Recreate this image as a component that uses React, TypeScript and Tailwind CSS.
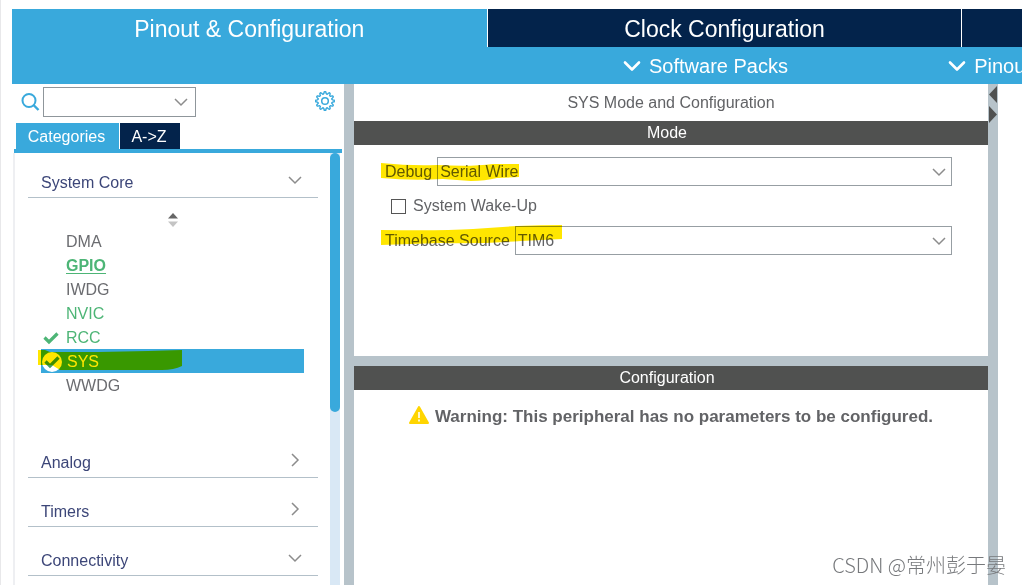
import { useState } from 'react';
import { clsx } from 'clsx';

type Peripheral = {
  name: string;
  state: 'default' | 'available' | 'configured';
  bold?: boolean;
};

const peripherals: Peripheral[] = [
  { name: 'DMA', state: 'default' },
  { name: 'GPIO', state: 'available', bold: true },
  { name: 'IWDG', state: 'default' },
  { name: 'NVIC', state: 'available' },
  { name: 'RCC', state: 'configured' },
  { name: 'SYS', state: 'configured' },
  { name: 'WWDG', state: 'default' },
];

function Chevron({ right = false }: { right?: boolean }) {
  return (
    <svg
      width="14"
      height="14"
      viewBox="0 0 14 14"
      fill="none"
      aria-hidden
      className={clsx('shrink-0', right && '-rotate-90')}
    >
      <path d="M1 4l6 6 6-6" stroke="#8c8c8c" strokeWidth="1.5" />
    </svg>
  );
}

function MenuChevron() {
  return (
    <svg width="18" height="12" viewBox="0 0 18 12" fill="none" aria-hidden className="shrink-0">
      <path
        d="M2 2.500L9 9.500l7-7"
        stroke="white"
        strokeWidth="2.600"
        strokeLinecap="round"
        strokeLinejoin="round"
      />
    </svg>
  );
}

function CheckIcon({ className }: { className?: string }) {
  return (
    <svg width="16" height="14" viewBox="0 0 16 14" fill="none" aria-hidden className={className}>
      <path d="M1.500 6.500L6 11l8.500-8.500" stroke="currentColor" strokeWidth="3.200" />
    </svg>
  );
}

function GearIcon() {
  const teeth = Array.from({ length: 80 }, (_, i) => {
    const a = (i / 80) * Math.PI * 2;
    const r = 8.2 + 1.1 * Math.max(-1, Math.min(1, 1.8 * Math.cos(a * 12)));
    return `${(10 + r * Math.cos(a)).toFixed(2)},${(10 + r * Math.sin(a)).toFixed(2)}`;
  }).join(' ');
  return (
    <svg width="20" height="20" viewBox="0 0 20 20" fill="none" stroke="#39a9dc" aria-hidden>
      <polygon points={teeth} strokeWidth="1.400" strokeLinejoin="round" />
      <circle cx="10" cy="10" r="3.300" strokeWidth="1.500" />
    </svg>
  );
}

function Section({
  title,
  open,
  onToggle,
  children,
}: {
  title: string;
  open: boolean;
  onToggle: () => void;
  children?: React.ReactNode;
}) {
  return (
    <section>
      <button
        type="button"
        aria-expanded={open}
        onClick={onToggle}
        className="flex h-[45px] w-full items-end justify-between border-b border-[#b3c0c9] pr-4 pb-0.5 pl-[13px] text-left text-base leading-6 text-[#3c4678]"
      >
        <span>{title}</span>
        <span className="flex h-[30px] items-center">
          <Chevron right={!open} />
        </span>
      </button>
      {children}
    </section>
  );
}

function SelectField({
  id,
  label,
  options,
  children,
}: {
  id: string;
  label: string;
  options: string[];
  children?: React.ReactNode;
}) {
  return (
    <div className="relative flex h-[29px] items-center gap-[5px]">
      <label htmlFor={id} className="whitespace-nowrap">
        {label}
      </label>
      <div className="relative h-full flex-1">
        <select
          id={id}
          className="h-full w-full appearance-none border border-[#979ea3] bg-white pl-0.5 outline-none focus:border-[#39a9dc]"
        >
          {options.map((o) => (
            <option key={o}>{o}</option>
          ))}
        </select>
        <span className="pointer-events-none absolute inset-y-0 right-1.5 flex items-center">
          <Chevron />
        </span>
      </div>
      {children}
    </div>
  );
}

function Header() {
  const tab = 'flex h-[38px] w-[47%] shrink-0 items-center justify-center pt-0.5 text-[23px] text-white';
  return (
    <header className="overflow-hidden">
      <nav className="flex" aria-label="Views">
        <button type="button" className={clsx(tab, 'bg-[#39a9dc]')}>
          Pinout &amp; Configuration
        </button>
        <button type="button" className={clsx(tab, 'border-l border-white bg-[#03234b]')}>
          Clock Configuration
        </button>
        <div className="flex-1 border-l border-white bg-[#03234b]" />
      </nav>
      <div className="flex h-[37px] items-center bg-[#39a9dc] text-xl whitespace-nowrap text-white">
        <div className="w-[60%] shrink-0" />
        <button type="button" className="flex w-[32%] shrink-0 items-center gap-2 pl-[5px]">
          <MenuChevron />
          Software Packs
        </button>
        <button type="button" className="flex shrink-0 items-center gap-2 pl-[7px]">
          <MenuChevron />
          Pinout
        </button>
      </div>
    </header>
  );
}

function PeripheralList({ selected, onSelect }: { selected: string; onSelect: (name: string) => void }) {
  return (
    <div className="pt-3 pb-8">
      <button type="button" aria-label="Sort" className="mx-auto flex h-[19px] w-4 justify-center pt-[3px]">
        <svg width="10" height="14" viewBox="0 0 10 14" aria-hidden>
          <path d="M0 5.500L5 0l5 5.500z" fill="#666" />
          <path d="M0 8.500h10L5 14z" fill="#c4c4c4" />
        </svg>
      </button>
      <ul className="pr-3.5 pl-[13px]">
        {peripherals.map((p) => {
          const active = p.name === selected;
          return (
            <li key={p.name} className="relative">
              <button
                type="button"
                onClick={() => onSelect(p.name)}
                className={clsx(
                  'flex h-6 w-full items-center pt-0.5 text-base',
                  active && 'bg-[#39a9dc] pl-px text-white',
                  !active && p.state === 'default' && 'text-[#6b6c70]',
                  !active && p.state !== 'default' && 'text-[#4db576]',
                  p.bold && 'font-bold underline underline-offset-2'
                )}
              >
                <span className="flex w-[25px] items-center">
                  {p.state === 'configured' &&
                    (active ? (
                      <span className="flex size-5 items-center justify-center rounded-full bg-white">
                        <CheckIcon className="text-[#3f9d63]" />
                      </span>
                    ) : (
                      <CheckIcon className="ml-0.5" />
                    ))}
                </span>
                {p.name}
              </button>
              {p.name === 'SYS' && (
                <svg
                  width="146"
                  height="22"
                  viewBox="0 0 146 22"
                  aria-hidden
                  className="pointer-events-none absolute top-0 -left-[3px] mix-blend-multiply"
                >
                  <path
                    d="M0 1H7L12 3H60L110 2L144 1V17Q136 21 124 21H22L14 16H0Z"
                    fill="#ffe600"
                  />
                </svg>
              )}
            </li>
          );
        })}
      </ul>
    </div>
  );
}

function Sidebar() {
  const [openSections, setOpenSections] = useState<string[]>(['System Core', 'Connectivity']);
  const [selected, setSelected] = useState('SYS');

  const toggle = (name: string) =>
    setOpenSections((list) => (list.includes(name) ? list.filter((n) => n !== name) : [...list, name]));

  return (
    <aside className="flex w-[332px] shrink-0 flex-col">
      <div className="flex items-center pt-[3px] pr-[9px] pl-[9px]">
        <svg width="19" height="19" viewBox="0 0 19 19" fill="none" aria-hidden className="mr-[3px]">
          <circle cx="8" cy="7.500" r="6.500" stroke="#39a9dc" strokeWidth="2" />
          <path d="M12.500 12l5 5" stroke="#39a9dc" strokeWidth="2.400" />
        </svg>
        <div className="relative h-[30px] w-[153px]">
          <input
            type="text"
            aria-label="Search peripherals"
            className="h-full w-full border border-[#8f969b] px-1 pr-7 text-base outline-none focus:border-[#39a9dc]"
          />
          <button type="button" aria-label="Show history" className="absolute inset-y-0 right-2 flex items-center">
            <Chevron />
          </button>
        </div>
        <button type="button" aria-label="Settings" className="ml-auto pb-0.5">
          <GearIcon />
        </button>
      </div>

      <div className="mt-1.5 mr-0.5 ml-0.5 flex gap-px border-b-4 border-[#39a9dc] pl-0.5 text-base text-white">
        <button type="button" className="h-[26px] w-[103px] bg-[#39a9dc] pr-0.5 pt-0.5">
          Categories
        </button>
        <button type="button" className="h-[26px] w-[60px] bg-[#03234b] pr-0.5 pt-0.5">
          A-&gt;Z
        </button>
      </div>

      <div className="ml-px flex flex-1 border-l-2 border-[#eeeff2]">
        <div className="flex flex-1 flex-col gap-1 pr-3 pl-[13px]">
          <Section
            title="System Core"
            open={openSections.includes('System Core')}
            onToggle={() => toggle('System Core')}
          >
            {openSections.includes('System Core') && (
              <PeripheralList selected={selected} onSelect={setSelected} />
            )}
          </Section>
          {['Analog', 'Timers', 'Connectivity'].map((title) => (
            <Section
              key={title}
              title={title}
              open={openSections.includes(title)}
              onToggle={() => toggle(title)}
            />
          ))}
        </div>
        <div className="mr-1 w-2.5 bg-[#d9e8f5]">
          <div className="h-[60%] rounded-full bg-[#39a9dc]" />
        </div>
      </div>
    </aside>
  );
}

function TitleBar({ children }: { children: React.ReactNode }) {
  return (
    <h2 className="flex h-6 items-center justify-center bg-[#505150] pr-2 text-base text-white">{children}</h2>
  );
}

function MainPanel() {
  return (
    <main className="flex min-w-0 flex-1 flex-col border-x-10 border-[#b7c3ca] text-base text-[#626366]">
      <h1 className="flex h-[37px] items-center justify-center">SYS Mode and Configuration</h1>

      <TitleBar>Mode</TitleBar>
      <div className="flex flex-col gap-1.5 pt-3 pr-9 pb-[101px] pl-[31px]">
        <SelectField id="debug" label="Debug" options={['Serial Wire', 'Disable', 'JTAG (4 pins)']}>
          <svg
            width="138"
            height="19"
            viewBox="0 0 138 19"
            aria-hidden
            className="pointer-events-none absolute top-1.5 -left-1 mix-blend-multiply"
          >
            <path
              d="M0 0Q30 3 56 2Q90 4 112 1L138 1V14L116 15Q104 18 90 18L62 16Q30 18 0 15Z"
              fill="#ffe600"
            />
          </svg>
        </SelectField>
        <label className="flex h-7 items-center gap-[7px] pl-1.5">
          <input type="checkbox" className="size-[15px] appearance-none border border-[#555] checked:bg-[#39a9dc]" />
          System Wake-Up
        </label>
        <SelectField id="timebase" label="Timebase Source" options={['TIM6', 'SysTick', 'TIM7']}>
          <svg
            width="181"
            height="20"
            viewBox="0 0 181 20"
            aria-hidden
            className="pointer-events-none absolute -top-px -left-1 mix-blend-multiply"
          >
            <path
              d="M0 5Q60 6 92 4L136 1Q160 0 181 0V14L140 16Q100 19 60 18L0 20Z"
              fill="#ffe600"
            />
          </svg>
        </SelectField>
      </div>

      <div className="h-2.5 bg-[#b7c3ca]" />
      <TitleBar>Configuration</TitleBar>
      <p className="flex items-center justify-center gap-1.5 pt-[15px] text-[17px] leading-6 font-bold whitespace-nowrap">
        <svg width="20" height="18" viewBox="0 0 20 18" aria-hidden className="mb-1">
          <path d="M10 1L19 17H1z" fill="#ffd500" stroke="#ffd500" strokeWidth="2" strokeLinejoin="round" />
          <path d="M10 6v6M10 13.500v2" stroke="white" strokeWidth="1.600" />
        </svg>
        Warning: This peripheral has no parameters to be configured.
      </p>
    </main>
  );
}

export default function App() {
  return (
    <div className="relative flex min-h-screen flex-col overflow-hidden border-l border-[#e8e8ea] bg-white pt-[9px] pl-[11px] font-['Liberation_Sans',Arial,sans-serif]">
      <Header />
      <div className="flex flex-1">
        <Sidebar />
        <MainPanel />
        <div className="relative w-6 shrink-0">
          {/* collapse handles sit on the splitter */}
          <button type="button" aria-label="Collapse panel" className="absolute top-0.5 -left-[9px]">
            <svg width="9" height="38" viewBox="0 0 9 38" fill="#505150" aria-hidden>
              <path d="M8 0v17L0 8.500z" />
              <path d="M0 20v17l8-8.500z" />
            </svg>
          </button>
        </div>
      </div>
      <div className="pointer-events-none absolute right-4 bottom-1.5 font-['Noto_Sans_CJK_SC',sans-serif] text-xl leading-7 font-light text-[#77797c]">
        CSDN @常州彭于晏
      </div>
    </div>
  );
}
